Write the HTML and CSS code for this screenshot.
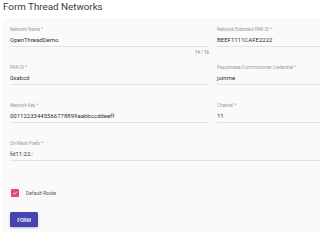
FILE: index.html
```html
<!DOCTYPE html>
<html lang="en">
<head>
    <meta charset="UTF-8">
    <title>Form Thread Networks</title>
    <link rel="stylesheet" href="styles.css">
</head>
<body>

<h1 class="page-title">Form Thread Networks</h1>

<div class="form-card">
    <!-- linha 1 -->
    <div class="form-row">
        <div class="field">
            <div class="field-box">
                <div class="field-label">Network Name *</div>
                <div class="field-value">OpenThreadDemo</div>
            </div>
            <div class="field-helper">14 / 16</div>
        </div>
        <div class="field grow">
            <div class="field-box">
                <div class="field-label">Network Extended PAN ID *</div>
                <div class="field-value">BEEF1111CAFE2222</div>
            </div>
            <div class="field-helper"></div>
        </div>
    </div>

    <!-- linha 2 -->
    <div class="form-row">
        <div class="field">
            <div class="field-box">
                <div class="field-label">PAN ID *</div>
                <div class="field-value">0xabcd</div>
            </div>
            <div class="field-helper"></div>
        </div>
        <div class="field grow">
            <div class="field-box">
                <div class="field-label">Passphrase/Commissioner Credential *</div>
                <div class="field-value">joinme</div>
            </div>
            <div class="field-helper"></div>
        </div>
    </div>

    <!-- linha 3 -->
    <div class="form-row">
        <div class="field">
            <div class="field-box">
                <div class="field-label">Network Key *</div>
                <div class="field-value">00112233445566778899aabbccddeeff</div>
            </div>
            <div class="field-helper"></div>
        </div>
        <div class="field grow">
            <div class="field-box">
                <div class="field-label">Channel *</div>
                <div class="field-value">11</div>
            </div>
            <div class="field-helper"></div>
        </div>
    </div>

    <!-- linha 4 -->
    <div class="form-row">
        <div class="field grow">
            <div class="field-box">
                <div class="field-label">On-Mesh Prefix *</div>
                <div class="field-value">fd11:22::</div>
            </div>
        </div>
    </div>

    <label class="check-row">
        <span class="checkbox">
            <svg viewBox="0 0 24 24" width="6" height="6"><path d="M4 12.5l5 5L20 6.5" fill="none" stroke="#fff" stroke-width="3.2"/></svg>
        </span>
        <span class="check-label">Default Route</span>
    </label>

    <button class="btn-form">FORM</button>
</div>

</body>
</html>
```

FILE: styles.css
```css
* { margin: 0; padding: 0; box-sizing: border-box; }

body {
    font-family: Roboto, "Noto Sans", sans-serif;
    background-color: #ffffff;
    color: #333333;
    width: 320px;
    overflow: hidden;
}

.page-title {
    font-size: 9.8px;
    font-weight: 400;
    line-height: 14px;
    color: #3a3a3a;
    padding: 0 3px;
    height: 18px;
}

.form-card {
    margin-left: 3px;
    background-color: #fafafa;
    padding: 9px 0 6px 7px;
    height: 214px;
}

.form-row { display: flex; gap: 8px; }

.field { flex: 0 0 199px; }
.field.grow { flex: 1; }

.field-box {
    border-bottom: 1px solid #e2e2e2;
    padding-bottom: 2px;
}
.field-label { font-size: 4.5px; line-height: 5px; color: #9a9a9a; }
.field-value { font-size: 6px; line-height: 8px; color: #333333; margin-top: 4px; white-space: nowrap; }
.field-helper {
    font-size: 4.5px;
    line-height: 6px;
    height: 6px;
    margin: 3px 0 9px;
    text-align: right;
    color: #777777;
}

.check-row {
    display: flex;
    align-items: center;
    gap: 7px;
    margin: 28px 0 0 1px;
}
.checkbox {
    width: 8px;
    height: 8px;
    border-radius: 1px;
    background-color: #ec407a;
    display: flex;
    align-items: center;
    justify-content: center;
}
.check-label { font-size: 5px; color: #555555; }

.btn-form {
    display: block;
    margin-top: 15px;
    width: 28px;
    height: 15px;
    border: none;
    border-radius: 1.5px;
    background-color: #4545b3;
    color: #ffffff;
    font-family: Roboto, sans-serif;
    font-size: 5px;
    font-weight: 500;
    box-shadow: 0 1px 2px rgba(0,0,0,0.25);
}
```
